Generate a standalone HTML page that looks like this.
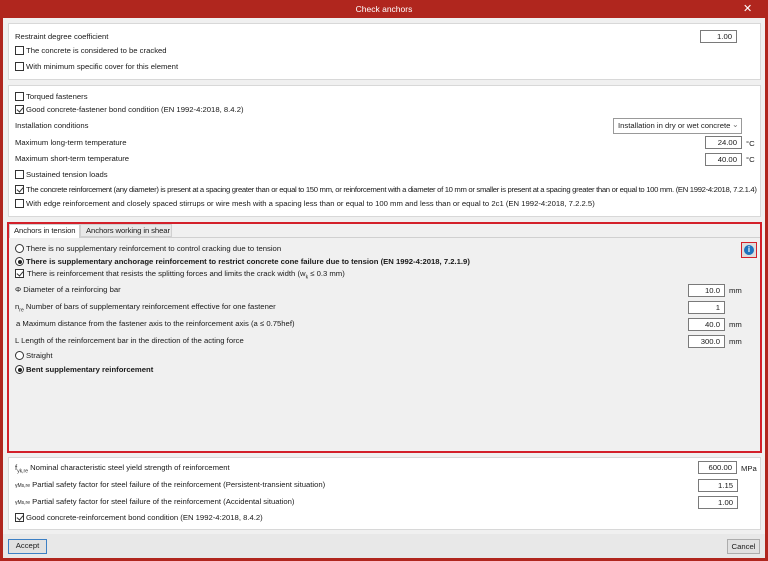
<!DOCTYPE html>
<html><head><meta charset="utf-8"><style>
*{box-sizing:border-box;margin:0;padding:0}
body{width:768px;height:561px;overflow:hidden;background:#b0261e;font-family:"Liberation Sans",sans-serif;font-size:7.7px;color:#1a1a1a;position:relative}
.a{position:absolute;white-space:nowrap}
#body{position:absolute;left:3px;top:18px;width:762px;height:540px;background:#f0f0f0}
.p{position:absolute;background:#fff;border:1px solid #d8d8d8}
.t{position:absolute;white-space:nowrap;line-height:10px}
.cb{position:absolute;width:9px;height:9px;border:1px solid #333;background:#fff}
.cb.c::after{content:"";position:absolute;left:2px;top:0px;width:3px;height:5px;border:solid #333;border-width:0 1px 1px 0;transform:rotate(40deg)}
.rd{position:absolute;width:9px;height:9px;border:1px solid #333;border-radius:50%;background:#fff}
.rd.c::after{content:"";position:absolute;left:1.5px;top:1.5px;width:4px;height:4px;border-radius:50%;background:#222}
.in{position:absolute;background:#fff;border:1px solid #7a7a7a;text-align:right;padding-right:4px;line-height:11px;height:13px}
b{font-weight:bold}
</style></head><body>
<div class="a" style="left:0;top:4px;width:768px;text-align:center;color:#fff;font-size:8.5px">Check anchors</div>
<div class="a" style="left:743px;top:2px;color:#fff;font-size:11px">✕</div>
<div id="body"></div>
<div class="p" style="left:8px;top:23px;width:753px;height:57px"></div>
<div class="t" style="left:15px;top:32px">Restraint degree coefficient</div>
<div class="in" style="left:700px;top:30px;width:37px">1.00</div>
<div class="cb" style="left:15px;top:46px"></div><div class="t" style="left:26px;top:46px">The concrete is considered to be cracked</div>
<div class="cb" style="left:15px;top:62px"></div><div class="t" style="left:26px;top:62px">With minimum specific cover for this element</div>

<div class="p" style="left:8px;top:85px;width:753px;height:132px"></div>
<div class="cb" style="left:15px;top:92px"></div><div class="t" style="left:26px;top:92px">Torqued fasteners</div>
<div class="cb c" style="left:15px;top:105px"></div><div class="t" style="left:26px;top:105px">Good concrete-fastener bond condition (EN 1992-4:2018, 8.4.2)</div>
<div class="t" style="left:15px;top:121px">Installation conditions</div>
<div class="in" style="left:613px;top:118px;width:129px;height:16px;text-align:left;padding-left:4px;line-height:14px;border-color:#999">Installation in dry or wet concrete</div>
<div class="a" style="left:732px;top:120px;color:#777;font-size:8px">⌄</div>
<div class="t" style="left:15px;top:138px">Maximum long-term temperature</div>
<div class="in" style="left:705px;top:136px;width:37px">24.00</div><div class="t" style="left:746px;top:139px">°C</div>
<div class="t" style="left:15px;top:154px">Maximum short-term temperature</div>
<div class="in" style="left:705px;top:153px;width:37px">40.00</div><div class="t" style="left:746px;top:155px">°C</div>
<div class="cb" style="left:15px;top:170px"></div><div class="t" style="left:26px;top:170px">Sustained tension loads</div>
<div class="cb c" style="left:15px;top:185px"></div><div class="t" style="left:26px;top:185px;letter-spacing:-0.32px">The concrete reinforcement (any diameter) is present at a spacing greater than or equal to 150 mm, or reinforcement with a diameter of 10 mm or smaller is present at a spacing greater than or equal to 100 mm. (EN 1992-4:2018, 7.2.1.4)</div>
<div class="cb" style="left:15px;top:199px"></div><div class="t" style="left:26px;top:199px">With edge reinforcement and closely spaced stirrups or wire mesh with a spacing less than or equal to 100 mm and less than or equal to 2c1 (EN 1992-4:2018, 7.2.2.5)</div>

<div class="a" style="left:7px;top:222px;width:755px;height:231px;border:2px solid #d3202a"></div>
<div class="a" style="left:9px;top:237px;width:751px;height:1px;background:#d0d0d0"></div>
<div class="a" style="left:9px;top:224px;width:71px;height:14px;background:#fff;border:1px solid #d0d0d0;border-bottom:none"></div>
<div class="t" style="left:14px;top:226px;letter-spacing:-0.1px">Anchors in tension</div>
<div class="a" style="left:80px;top:224px;width:92px;height:13px;background:#e8e8e8;border:1px solid #d0d0d0"></div>
<div class="t" style="left:86px;top:226px;letter-spacing:-0.1px">Anchors working in shear</div>
<div class="a" style="left:741px;top:242px;width:16px;height:16px;border:1.5px solid #d3202a;background:#ddd"></div>
<div class="a" style="left:744px;top:245px;width:10px;height:10px;border-radius:50%;background:#1e73be;color:#fff;font-size:8px;font-weight:bold;text-align:center;line-height:10px">i</div>
<div class="rd" style="left:15px;top:244px"></div><div class="t" style="left:26px;top:244px">There is no supplementary reinforcement to control cracking due to tension</div>
<div class="rd c" style="left:15px;top:257px"></div><div class="t" style="left:26px;top:257px"><b>There is supplementary anchorage reinforcement to restrict concrete cone failure due to tension (EN 1992-4:2018, 7.2.1.9)</b></div>
<div class="cb c" style="left:15px;top:269px"></div><div class="t" style="left:27px;top:269px">There is reinforcement that resists the splitting forces and limits the crack width (w<sub style="font-size:5px">k</sub> ≤ 0.3 mm)</div>
<div class="t" style="left:15px;top:285px">Φ Diameter of a reinforcing bar</div>
<div class="in" style="left:688px;top:284px;width:37px">10.0</div><div class="t" style="left:729px;top:286px">mm</div>
<div class="t" style="left:15px;top:302px">n<sub style="font-size:5px">re</sub> Number of bars of supplementary reinforcement effective for one fastener</div>
<div class="in" style="left:688px;top:301px;width:37px">1</div>
<div class="t" style="left:16px;top:319px">a Maximum distance from the fastener axis to the reinforcement axis (a ≤ 0.75hef)</div>
<div class="in" style="left:688px;top:318px;width:37px">40.0</div><div class="t" style="left:729px;top:320px">mm</div>
<div class="t" style="left:15px;top:336px">L Length of the reinforcement bar in the direction of the acting force</div>
<div class="in" style="left:688px;top:335px;width:37px">300.0</div><div class="t" style="left:729px;top:337px">mm</div>
<div class="rd" style="left:15px;top:351px"></div><div class="t" style="left:26px;top:351px">Straight</div>
<div class="rd c" style="left:15px;top:365px"></div><div class="t" style="left:26px;top:365px"><b>Bent supplementary reinforcement</b></div>

<div class="p" style="left:8px;top:457px;width:753px;height:73px"></div>
<div class="t" style="left:15px;top:463px">f<sub style="font-size:5px">yk,re</sub> Nominal characteristic steel yield strength of reinforcement</div>
<div class="in" style="left:698px;top:461px;width:39px">600.00</div><div class="t" style="left:741px;top:464px">MPa</div>
<div class="t" style="left:15px;top:480px"><span style="font-size:5px">γMs,re</span> Partial safety factor for steel failure of the reinforcement (Persistent-transient situation)</div>
<div class="in" style="left:698px;top:479px;width:40px">1.15</div>
<div class="t" style="left:15px;top:497px"><span style="font-size:5px">γMs,re</span> Partial safety factor for steel failure of the reinforcement (Accidental situation)</div>
<div class="in" style="left:698px;top:496px;width:40px">1.00</div>
<div class="cb c" style="left:15px;top:513px"></div><div class="t" style="left:26px;top:513px">Good concrete-reinforcement bond condition (EN 1992-4:2018, 8.4.2)</div>

<div class="a" style="left:3px;top:534px;width:762px;height:24px;background:#e8e8e8"></div>
<div class="a" style="left:8px;top:539px;width:39px;height:15px;border:1.5px solid #3c7fc4;background:#e1e1e1;text-align:center;line-height:12px">Accept</div>
<div class="a" style="left:727px;top:539px;width:33px;height:15px;border:1px solid #adadad;background:#e1e1e1;text-align:center;line-height:13px">Cancel</div>
</body></html>
